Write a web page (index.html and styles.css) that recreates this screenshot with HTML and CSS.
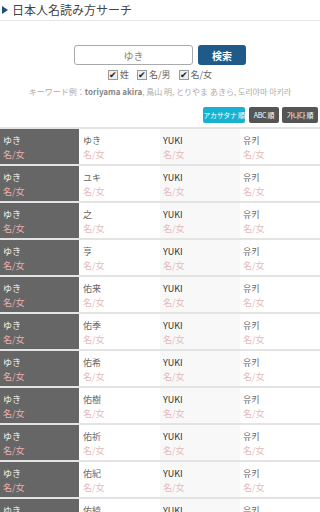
FILE: index.html
```html
<!DOCTYPE html>
<html lang="ja">
<head>
  <meta charset="UTF-8" />
  <meta name="viewport" content="width=device-width, initial-scale=1.0"/>
  <title>日本人名読み方サーチ</title>
  <link rel="stylesheet" href="styles.css">
</head>
<body>
  <header class="header">
    <span class="arrow"></span>
    <h1>日本人名読み方サーチ</h1>
  </header>

  <form class="search" onsubmit="return false">
    <div class="search-row">
      <input class="query" type="text" value="ゆき">
      <button class="go">検索</button>
    </div>
    <div class="checks">
      <label><span class="box">✔</span>姓</label>
      <label><span class="box">✔</span>名/男</label>
      <label><span class="box">✔</span>名/女</label>
    </div>
    <p class="hint">キーワード例：<b>toriyama akira</b>, 鳥山 明, とりやま あきら, 도리야마 아키라</p>
  </form>

  <div class="sort">
    <button class="tab active">アカサタナ 順</button>
    <button class="tab abc">ABC 順</button>
    <button class="tab kor">가나다 順</button>
  </div>

  <div class="results" id="results"></div>

  <script>
    var names = ["ゆき", "ユキ", "之", "亨", "佑来", "佑季", "佑希", "佑樹", "佑祈", "佑紀", "佑綺"];
    var html = "";
    for (var i = 0; i < names.length; i++) {
      html += '<div class="row">' +
        '<div class="cell key"><span>ゆき</span><small>名/女</small></div>' +
        '<div class="cell"><span>' + names[i] + '</span><small>名/女</small></div>' +
        '<div class="cell alt"><span>YUKI</span><small>名/女</small></div>' +
        '<div class="cell"><span>유키</span><small>名/女</small></div>' +
        '</div>';
    }
    document.getElementById("results").innerHTML = html;
  </script>
</body>
</html>
```

FILE: styles.css
```css
* {
  box-sizing: border-box;
  margin: 0;
  padding: 0;
}

body {
  font-family: "Noto Sans CJK JP", "Noto Sans", sans-serif;
  background: #fff;
  color: #444;
  width: 320px;
}

.header {
  display: flex;
  align-items: center;
  height: 21px;
  padding-left: 2px;
  border-bottom: 1px solid #e6e6e6;
}

.arrow {
  width: 0;
  height: 0;
  border-top: 4px solid transparent;
  border-bottom: 4px solid transparent;
  border-left: 6px solid #1d4f7a;
  margin-right: 4px;
}

.header h1 {
  font-size: 12px;
  font-weight: normal;
  color: #444;
  line-height: 14px;
}

.search {
  padding-top: 24px;
  display: flex;
  flex-direction: column;
  align-items: center;
}

.search-row {
  display: flex;
  gap: 5px;
}

.query {
  width: 119px;
  height: 20px;
  border: 1px solid #aaa;
  border-radius: 3px;
  text-align: center;
  font-family: inherit;
  font-size: 10px;
  color: #888;
}

.go {
  width: 48px;
  height: 20px;
  border: none;
  border-radius: 3px;
  background: #1f5a88;
  color: #fff;
  font-family: inherit;
  font-size: 10px;
  font-weight: bold;
}

.checks {
  display: flex;
  gap: 8px;
  margin-top: 3px;
  font-size: 9px;
  line-height: 14px;
  color: #666;
}

.checks label {
  display: flex;
  align-items: center;
  gap: 2px;
}

.box {
  width: 10px;
  height: 10px;
  border: 1px solid #999;
  background: #eee;
  font-size: 9px;
  line-height: 8px;
  color: #222;
  text-align: center;
}

.hint {
  margin-top: 3px;
  font-size: 8px;
  line-height: 14px;
  color: #aaa;
  white-space: nowrap;
}

.hint b {
  color: #888;
}

.sort {
  display: flex;
  justify-content: flex-end;
  gap: 3px;
  padding: 8px 2px 0 0;
}

.tab {
  width: 36px;
  height: 16px;
  padding: 0;
  border: none;
  border-radius: 2px;
  background: #555;
  color: #fff;
  font-family: inherit;
  font-size: 7px;
  white-space: nowrap;
  letter-spacing: -0.3px;
}

.tab.active {
  width: 42px;
  margin-right: 1px;
  background: #16b2d2;
}

.tab.abc {
  width: 30px;
}

.results {
  margin-top: 4px;
  border-top: 2px solid #e4e4e4;
}

.row {
  display: flex;
  height: 37px;
  border-bottom: 2px solid #e4e4e4;
}

.cell {
  width: 80px;
  padding: 5px 3px 0;
  display: flex;
  flex-direction: column;
  font-size: 9px;
  line-height: 14px;
  color: #666;
}

.cell small {
  font-size: 9px;
  color: #e6baba;
}

.cell.key {
  width: 79px;
  margin-right: 1px;
  background: #666;
  color: #eee;
}

.cell.key small {
  color: #e8b0b0;
}

.cell.alt {
  background: #f8f8f8;
  color: #333;
}
```
